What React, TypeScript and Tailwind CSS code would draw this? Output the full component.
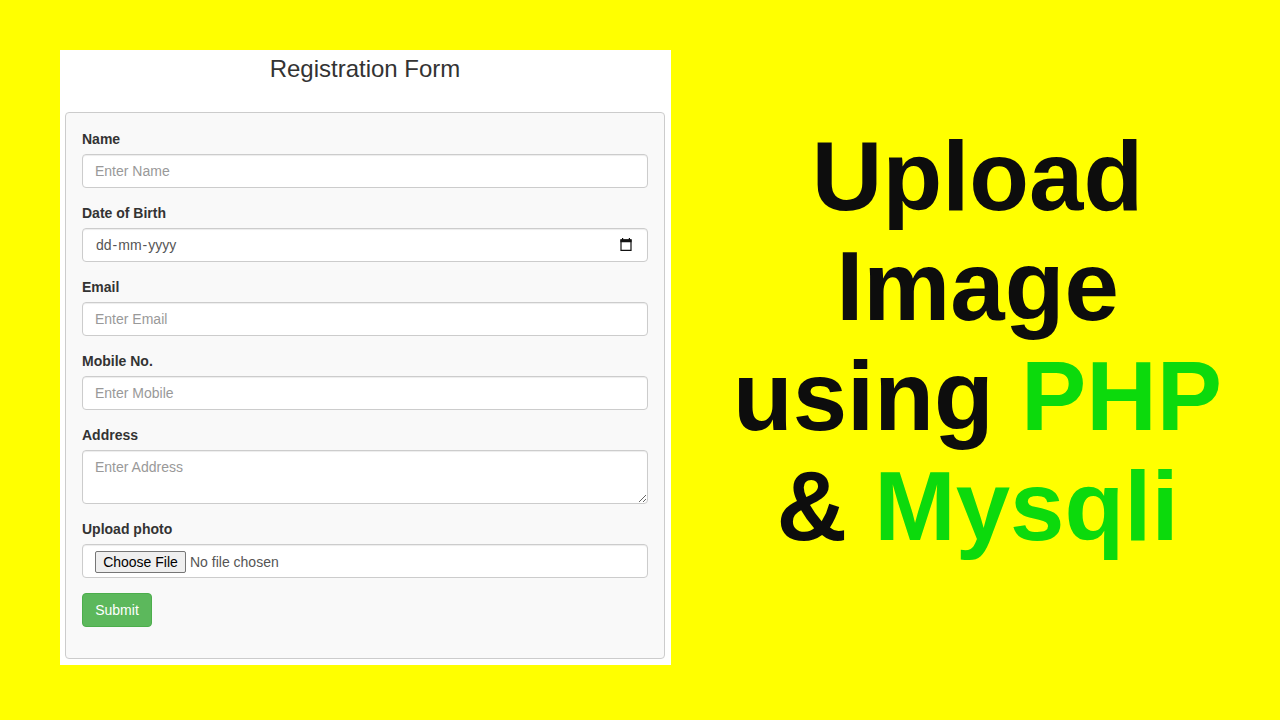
import type { ReactNode } from "react";

interface FieldProps {
  label: string;
  children: ReactNode;
}

const control =
  "w-full rounded border border-[#ccc] bg-white px-3 text-[14px] leading-5 shadow-[inset_0_1px_1px_rgba(0,0,0,0.075)]";

function Field({ label, children }: FieldProps) {
  return (
    <div className="mb-[15px]">
      <div className="mb-[5px] text-[14px] leading-5 font-bold text-[#333]">{label}</div>
      {children}
    </div>
  );
}

function TextInput({ placeholder }: { placeholder: string }) {
  return (
    <input
      type="text"
      placeholder={placeholder}
      className={`${control} block h-[34px] placeholder:text-[#999]`}
    />
  );
}

function CalendarIcon() {
  return (
    <svg width="12" height="13" viewBox="0 0 12 13" fill="none">
      <path d="M1 2h10v10.3H1z" stroke="#111" strokeWidth="1.2" />
      <path d="M0.4 1.3h11.2v2.9H0.4zM2 0h1.2v2H2zM8.8 0H10v2H8.8z" fill="#111" />
    </svg>
  );
}

function RegistrationForm() {
  return (
    <div className="h-[615px] w-[611px] bg-white px-[5px]">
      <h3 className="w-[600px] pt-[5px] text-center text-[24px] leading-[27px] text-[#333]">
        Registration Form
      </h3>
      <div className="mt-[30px] h-[547px] w-[600px] rounded border border-[#ccc] bg-[#f9f9f9] px-4 pt-4">
        <Field label="Name">
          <TextInput placeholder="Enter Name" />
        </Field>
        <Field label="Date of Birth">
          <div className={`${control} flex h-[34px] items-center justify-between text-[#555]`}>
            <span className="flex">
              <span className="px-px">dd</span>-<span className="px-px">mm</span>-
              <span className="px-px">yyyy</span>
            </span>
            <span className="pr-[3px] pb-px">
              <CalendarIcon />
            </span>
          </div>
        </Field>
        <Field label="Email">
          <TextInput placeholder="Enter Email" />
        </Field>
        <Field label="Mobile No.">
          <TextInput placeholder="Enter Mobile" />
        </Field>
        <Field label="Address">
          <textarea
            placeholder="Enter Address"
            className={`${control} block h-[54px] resize-y py-1.5 placeholder:text-[#999]`}
          />
        </Field>
        <Field label="Upload photo">
          <div className={`${control} flex h-[34px] items-center pt-0.5 text-[#555]`}>
            <button
              type="button"
              className="mr-1 h-[22px] w-[91px] rounded-[2px] border border-[#767676] bg-[#efefef] text-[14px] leading-5 text-black"
            >
              Choose File
            </button>
            <span>No file chosen</span>
          </div>
        </Field>
        <button
          type="button"
          className="h-[34px] w-[70px] rounded border border-[#4cae4c] bg-[#5cb85c] text-[14px] leading-5 text-white"
        >
          Submit
        </button>
      </div>
    </div>
  );
}

export default function App() {
  return (
    <div className="flex h-[720px] w-[1280px] overflow-hidden bg-[#ffff00] pt-[50px] pl-[60px] font-['Liberation_Sans',Arial,sans-serif]">
      <RegistrationForm />
      <h1 className="mt-[71px] ml-[46px] w-[521px] text-center text-[97.8px] leading-[110px] font-bold whitespace-nowrap text-[#0d0d0d]">
        Upload
        <br />
        Image
        <br />
        using <span className="text-[#0cda0c]">PHP</span>
        <br />
        &amp; <span className="text-[#0cda0c]">Mysqli</span>
      </h1>
    </div>
  );
}
